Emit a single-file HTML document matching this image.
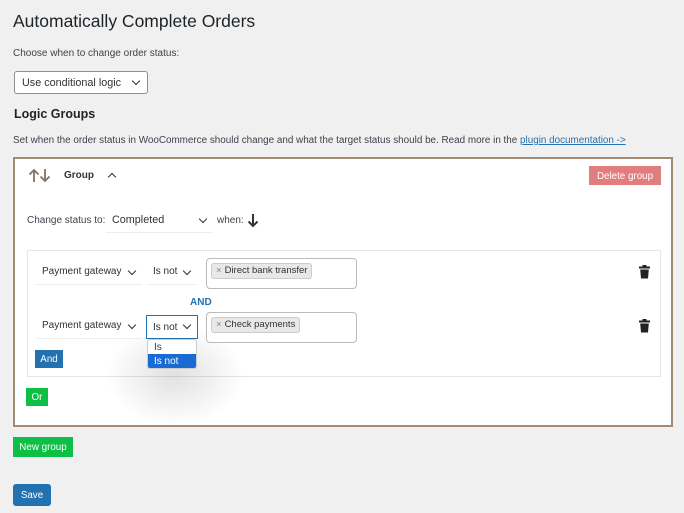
<!DOCTYPE html>
<html><head><meta charset="utf-8"><style>
*{box-sizing:border-box;margin:0;padding:0}
body{width:684px;height:513px;background:#f0f0f1;font-family:"Liberation Sans",sans-serif;color:#3c434a;position:relative;overflow:hidden;font-size:11px}
.a{position:absolute;white-space:nowrap}
.chev{position:absolute;width:6px;height:6px;border-right:1.5px solid #333;border-bottom:1.5px solid #333;transform:rotate(45deg)}
.sel{position:absolute;background:#fff;border-bottom:1px solid #eee;font-size:10px;color:#2c3338;padding:0 6px;line-height:24px}
.tag{position:absolute;background:#e8e8e8;border:1px solid #ccc;border-radius:3px;font-size:9.5px;color:#333;line-height:14px;padding:0 4px}
.tag b{font-weight:normal;color:#888;margin-right:3px}
.box{position:absolute;background:#fff;border:1px solid #bbb;border-radius:4px}
.btn{position:absolute;color:#fff;font-size:9.8px;text-align:center;padding-top:2px}
</style></head><body>
<div class="a" style="left:13px;top:11px;font-size:17.5px;color:#1d2327">Automatically Complete Orders</div>
<div class="a" style="left:13px;top:48px;font-size:10px">Choose when to change order status:</div>
<div class="a" style="left:14px;top:71px;width:134px;height:23px;background:#fff;border:1px solid #8c8f94;border-radius:3px;font-size:10.8px;color:#2c3338;padding:5px 0 0 7px">Use conditional logic</div>
<div class="chev" style="left:133px;top:78px"></div>
<div class="a" style="left:14px;top:107px;font-size:12.5px;font-weight:bold;color:#1d2327">Logic Groups</div>
<div class="a" style="left:13px;top:135px;font-size:9.9px">Set when the order status in WooCommerce should change and what the target status should be. Read more in the <span style="color:#2271b1;text-decoration:underline">plugin documentation -&gt;</span></div>

<div class="a" style="left:13px;top:157px;width:660px;height:270px;background:#fff;border:2px solid #a48a72"></div>
<svg class="a" style="left:28px;top:168px" width="23" height="15" viewBox="0 0 23 15" fill="none" stroke="#8a6f58" stroke-width="1.8"><path d="M6 14V2M1.5 6.5L6 2l4.5 4.5M17 1v12M12.5 8.5L17 13l4.5-4.5"/></svg>
<div class="a" style="left:64px;top:170px;font-size:10px;font-weight:bold;color:#333">Group</div>
<div class="chev" style="left:109px;top:174px;transform:rotate(225deg)"></div>
<div class="btn" style="left:589px;top:166px;width:72px;height:19px;background:#e27d7d;line-height:17px">Delete group</div>

<div class="a" style="left:27px;top:215px;font-size:10px">Change status to:</div>
<div class="sel" style="left:106px;top:208px;width:107px;font-size:10.8px">Completed</div>
<div class="chev" style="left:200px;top:216px"></div>
<div class="a" style="left:217px;top:215px;font-size:10px">when:</div>
<svg class="a" style="left:247px;top:213px" width="12" height="15" viewBox="0 0 12 15" fill="none" stroke="#333" stroke-width="2"><path d="M6 1v12M1.5 8.5L6 13l4.5-4.5"/></svg>

<div class="a" style="left:27px;top:250px;width:634px;height:127px;background:#fff;border:1px solid #e6e6e6"></div>
<div class="a" style="left:100px;top:320px;width:150px;height:110px;background:radial-gradient(ellipse at center,rgba(0,0,0,.12),rgba(0,0,0,0) 65%)"></div>

<div class="sel" style="left:36px;top:260px;width:106px">Payment gateway</div>
<div class="chev" style="left:129px;top:268px"></div>
<div class="sel" style="left:147px;top:260px;width:50px">Is not</div>
<div class="chev" style="left:184px;top:268px"></div>
<div class="box" style="left:206px;top:258px;width:151px;height:31px"></div>
<div class="tag" style="left:211px;top:263px"><b>×</b>Direct bank transfer</div>
<div class="a" style="left:190px;top:297px;font-size:10px;font-weight:bold;color:#2271b1">AND</div>

<div class="sel" style="left:36px;top:314px;width:106px">Payment gateway</div>
<div class="chev" style="left:129px;top:322px"></div>
<div class="a" style="left:146px;top:315px;width:52px;height:24px;background:#fff;border:1px solid #2271b1;font-size:10px;color:#2c3338;padding:6px 0 0 6px">Is not</div>
<div class="chev" style="left:184px;top:322px"></div>
<div class="box" style="left:206px;top:312px;width:151px;height:31px"></div>
<div class="tag" style="left:211px;top:317px"><b>×</b>Check payments</div>

<div class="a" style="left:147px;top:339px;width:50px;height:30px;background:#fff;border:1px solid #ccc;border-radius:3px;overflow:hidden;font-size:10px">
<div style="padding:1px 0 0 6px;height:14px;line-height:13px">Is</div>
<div style="background:#1a6ad3;color:#fff;padding-left:6px;height:15px;line-height:15px">Is not</div></div>

<svg class="a" style="left:639px;top:265px" width="11" height="14" viewBox="0 0 11 14"><rect x="0" y="1.5" width="11" height="2" fill="#222"/><rect x="3.5" y="0" width="4" height="2" fill="#222"/><path d="M1.2 4.5h8.6l-.8 9h-7z" fill="#222"/></svg>
<svg class="a" style="left:639px;top:319px" width="11" height="14" viewBox="0 0 11 14"><rect x="0" y="1.5" width="11" height="2" fill="#222"/><rect x="3.5" y="0" width="4" height="2" fill="#222"/><path d="M1.2 4.5h8.6l-.8 9h-7z" fill="#222"/></svg>

<div class="btn" style="left:35px;top:350px;width:28px;height:18px;background:#2271b1;line-height:16px">And</div>
<div class="btn" style="left:26px;top:388px;width:22px;height:18px;background:#0dbf45;line-height:16px">Or</div>
<div class="btn" style="left:13px;top:437px;width:60px;height:20px;background:#0dbf45;line-height:18px">New group</div>
<div class="btn" style="left:13px;top:484px;width:38px;height:22px;background:#2271b1;border-radius:3px;line-height:20px">Save</div>
</body></html>
